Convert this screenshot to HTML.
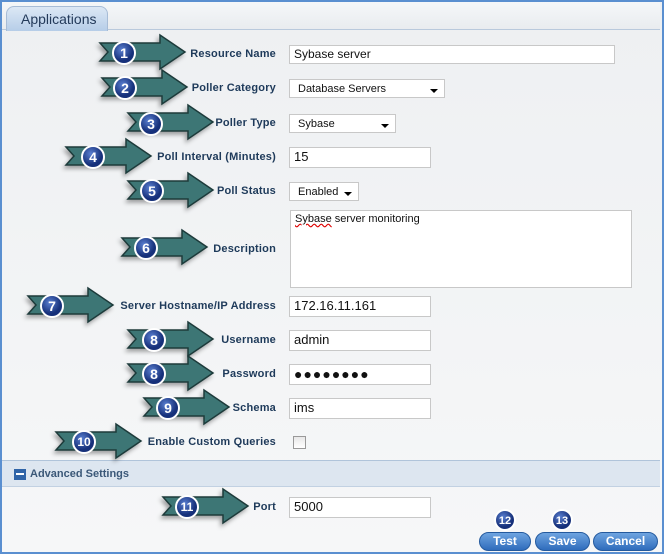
<!DOCTYPE html>
<html><head><meta charset="utf-8"><style>
*{margin:0;padding:0;box-sizing:border-box}
body{width:664px;height:554px;overflow:hidden;background:#fff;font-family:"Liberation Sans",sans-serif;position:relative}
#frame{position:absolute;left:0;top:0;width:664px;height:554px;border:2px solid #5a8fd0;background:linear-gradient(#eef0f2,#f6f7f8)}
.tabbar{position:absolute;left:2px;top:2px;width:658px;height:28px;background:linear-gradient(#f5f7f9,#e9ecef);border-bottom:1px solid #b9c9dc}
.tab{position:absolute;left:4px;top:4px;width:102px;height:25px;border:1px solid #a7bcd6;border-bottom:none;border-radius:8px 8px 0 0;background:linear-gradient(#dce8f5,#b6cde8);font-size:14px;color:#233a5a;padding:4px 0 0 14px}
.lbl{position:absolute;right:388px;font-size:11px;font-weight:bold;color:#1e3a5a;white-space:nowrap;transform:translateY(-50%);letter-spacing:0.2px}
.in{position:absolute;left:289px;height:19px;background:#fff;border:1px solid #c8c8c8;font-size:13px;color:#111;padding:1px 0 0 4px}
.sel{font-size:11px;padding:3px 0 0 8px}
.sel:after{content:"";position:absolute;right:6px;top:9px;border:4px solid transparent;border-top:4px solid #000}
.adv{position:absolute;left:2px;top:460px;width:658px;height:27px;background:#dde6f0;border-top:1px solid #b0c4da;border-bottom:1px solid #c2d1e2;font-size:11px;font-weight:bold;color:#3b5878;padding:7px 0 0 28px}
.adv i{position:absolute;left:12px;top:8px;width:12px;height:11px;background:#2f64a8}
.adv i:after{content:"";position:absolute;left:2px;top:4px;width:8px;height:2px;background:#fff}
.btn{position:absolute;top:532px;height:19px;border-radius:10px;background:linear-gradient(#6ea4e0,#2f6cbc);border:1px solid #245a9e;color:#fff;font-size:12px;font-weight:bold;text-align:center;line-height:17px}
svg{position:absolute;left:0;top:0}
</style></head><body>
<div id="frame"></div>
<div class="tabbar"><div class="tab">Applications</div></div>

<div class="lbl" style="top:54px">Resource Name</div>
<div class="lbl" style="top:88px">Poller Category</div>
<div class="lbl" style="top:123px">Poller Type</div>
<div class="lbl" style="top:157px">Poll Interval (Minutes)</div>
<div class="lbl" style="top:191px">Poll Status</div>
<div class="lbl" style="top:249px">Description</div>
<div class="lbl" style="top:306px">Server Hostname/IP Address</div>
<div class="lbl" style="top:340px">Username</div>
<div class="lbl" style="top:374px">Password</div>
<div class="lbl" style="top:408px">Schema</div>
<div class="lbl" style="top:442px">Enable Custom Queries</div>
<div class="lbl" style="top:507px">Port</div>

<div class="in" style="top:45px;width:326px;font-size:12px">Sybase server</div>
<div class="in sel" style="top:79px;width:156px">Database Servers</div>
<div class="in sel" style="top:114px;width:107px">Sybase</div>
<div class="in" style="top:147px;width:142px;height:21px">15</div>
<div class="in sel" style="top:182px;width:70px">Enabled</div>
<div class="in" style="top:210px;left:290px;width:342px;height:78px;font-size:11px;padding:2px 0 0 4px"><span style="text-decoration:underline wavy #d00">Sybase</span> server monitoring</div>
<div class="in" style="top:296px;width:142px;height:21px">172.16.11.161</div>
<div class="in" style="top:330px;width:142px;height:21px">admin</div>
<div class="in" style="top:364px;width:142px;height:21px;font-size:14px;letter-spacing:1px">●●●●●●●●</div>
<div class="in" style="top:398px;width:142px;height:21px">ims</div>
<div style="position:absolute;left:293px;top:436px;width:13px;height:13px;border:1px solid #999;background:linear-gradient(#e8e8e8,#fff)"></div>
<div class="adv"><i></i>Advanced Settings</div>
<div class="in" style="top:497px;width:142px;height:21px">5000</div>

<div class="btn" style="left:479px;width:52px">Test</div>
<div class="btn" style="left:535px;width:55px">Save</div>
<div class="btn" style="left:593px;width:65px">Cancel</div>

<svg width="664" height="554">
<defs>
<filter id="sh" x="-20%" y="-40%" width="140%" height="180%"><feDropShadow dx="-2" dy="3" stdDeviation="2" flood-color="#000" flood-opacity="0.35"/></filter>
<g id="ar"><polygon points="0,-9 60,-9 60,-17 85,0 60,17 60,9 0,9 8,0" fill="#3d7674" stroke="#1f3a3a" stroke-width="1.5" filter="url(#sh)"/></g>
<radialGradient id="cg" cx="40%" cy="35%"><stop offset="0" stop-color="#5a7fd0"/><stop offset="1" stop-color="#16307a"/></radialGradient>
</defs>
<g font-family="Liberation Sans" font-weight="bold" font-size="14" fill="#fff" text-anchor="middle">
<use href="#ar" x="100" y="52"/><circle cx="124" cy="53" r="11" fill="url(#cg)" stroke="#fff" stroke-width="2"/><text x="124" y="58">1</text>
<use href="#ar" x="102" y="87"/><circle cx="125" cy="88" r="11" fill="url(#cg)" stroke="#fff" stroke-width="2"/><text x="125" y="93">2</text>
<use href="#ar" x="128" y="122"/><circle cx="151" cy="124" r="11" fill="url(#cg)" stroke="#fff" stroke-width="2"/><text x="151" y="129">3</text>
<use href="#ar" x="66" y="156"/><circle cx="93" cy="157" r="11" fill="url(#cg)" stroke="#fff" stroke-width="2"/><text x="93" y="162">4</text>
<use href="#ar" x="128" y="190"/><circle cx="152" cy="191" r="11" fill="url(#cg)" stroke="#fff" stroke-width="2"/><text x="152" y="196">5</text>
<use href="#ar" x="122" y="247"/><circle cx="146" cy="248" r="11" fill="url(#cg)" stroke="#fff" stroke-width="2"/><text x="146" y="253">6</text>
<use href="#ar" x="28" y="305"/><circle cx="52" cy="306" r="11" fill="url(#cg)" stroke="#fff" stroke-width="2"/><text x="52" y="311">7</text>
<use href="#ar" x="128" y="339"/><circle cx="154" cy="340" r="11" fill="url(#cg)" stroke="#fff" stroke-width="2"/><text x="154" y="345">8</text>
<use href="#ar" x="128" y="373"/><circle cx="154" cy="374" r="11" fill="url(#cg)" stroke="#fff" stroke-width="2"/><text x="154" y="379">8</text>
<use href="#ar" x="144" y="407"/><circle cx="168" cy="408" r="11" fill="url(#cg)" stroke="#fff" stroke-width="2"/><text x="168" y="413">9</text>
<use href="#ar" x="56" y="441"/><circle cx="84" cy="442" r="11" fill="url(#cg)" stroke="#fff" stroke-width="2"/><text x="84" y="446" font-size="12">10</text>
<use href="#ar" x="163" y="506"/><circle cx="187" cy="507" r="11" fill="url(#cg)" stroke="#fff" stroke-width="2"/><text x="187" y="511" font-size="12">11</text>
<circle cx="505" cy="520" r="10" fill="url(#cg)" stroke="#fff" stroke-width="2"/><text x="505" y="524" font-size="11">12</text>
<circle cx="562" cy="520" r="10" fill="url(#cg)" stroke="#fff" stroke-width="2"/><text x="562" y="524" font-size="11">13</text>
</g>
</svg>
</body></html>
